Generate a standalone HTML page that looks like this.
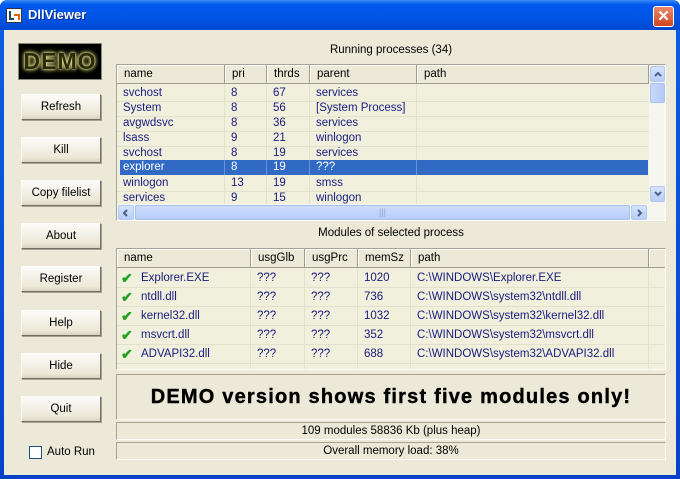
<!DOCTYPE html>
<html><head><meta charset="utf-8"><style>
*{margin:0;padding:0;box-sizing:border-box}
body{width:680px;height:479px;overflow:hidden;background:#fff;font-family:"Liberation Sans",Tahoma,sans-serif;font-size:11px;position:relative}
.a{position:absolute}
#win{left:0;top:0;width:680px;height:479px;background:linear-gradient(#0a5ee6,#0842c8);border-radius:7px 7px 0 0}
#title{left:0;top:0;width:680px;height:30px;background:linear-gradient(#3a8cf5 0%,#0058ee 15%,#0055e5 60%,#0048d0 100%);border-radius:7px 7px 0 0}
#client{left:4px;top:30px;width:672px;height:445px;background:#ece9d8}
.btn{position:absolute;left:21px;width:80px;height:26px;background:linear-gradient(#fbfbf8,#ece9d8 80%,#d8d4c4);border:1px solid;border-color:#fff #716f64 #716f64 #fff;box-shadow:1px 1px 0 #a6a395;text-align:center;line-height:24px;font-size:11.5px;color:#000}
.lv{position:absolute;left:116px;width:550px;background:#f0f0dc;border:1px solid;border-color:#a6a395 #fff #fff #a6a395;overflow:hidden}
.hd{position:absolute;top:0;height:19px;background:#ece9d8;border-right:1px solid #a09d90;border-bottom:1px solid #a09d90;box-shadow:inset 1px 1px 0 #fff;padding-left:7px;line-height:18px;font-size:11.5px;color:#000}
.r{position:absolute;left:0;height:15px;font-size:11.5px;color:#1a1a80;line-height:15px;white-space:nowrap}
.c{position:absolute;top:0;padding-left:4px}
.vl{position:absolute;top:19px;width:1px;background:#e2e2cc}
.hl{position:absolute;left:0;height:1px;background:#e2e2cc}
.panel{position:absolute;left:116px;width:550px;border:1px solid;border-color:#a6a395 #fff #fff #a6a395;text-align:center;font-size:11.5px;color:#000}
.sb{position:absolute;width:15px;height:15px;background:linear-gradient(#d6e3fe,#b6cdf8);border:1px solid #b4c8f0;border-radius:2px}
.sb svg{position:absolute;left:3px;top:3px}
.chk{color:#21a121;font-weight:bold;font-size:14px;position:absolute;left:4px}
</style></head><body>
<div id="win" class="a"></div>
<div id="title" class="a">
  <div class="a" style="left:6px;top:8px;width:16px;height:15px;background:#fff;border:1px solid #334"><div class="a" style="left:2px;top:2px;width:5px;height:9px;border-left:2px solid #246;border-bottom:2px solid #246"></div><div class="a" style="left:7px;top:5px;width:6px;height:6px;border-right:2px solid #d60;border-top:2px solid #d60"></div></div>
  <div class="a" style="left:28px;top:7px;color:#fff;font-weight:bold;font-size:13px;text-shadow:1px 1px 0 #0a2c8a">DllViewer</div>
  <div class="a" style="left:653px;top:6px;width:21px;height:21px;background:linear-gradient(#e88a6c,#d2451e);border:1px solid #fff;border-radius:3px;color:#fff;font-weight:bold;font-size:15px;text-align:center;line-height:19px">✕</div>
</div>
<div id="client" class="a"></div>

<div class="a" style="left:18px;top:43px;width:84px;height:37px;background:#000;border:1px solid #8a8878"><div style="text-align:center;font-size:23px;font-weight:bold;color:#2a2a08;line-height:35px;letter-spacing:1px;text-shadow:0 0 2px #e8e8a0,0 0 4px #d8d880,0 0 6px #a0a050">DEMO</div></div>

<div class="btn" style="top:94px">Refresh</div>
<div class="btn" style="top:137px">Kill</div>
<div class="btn" style="top:180px">Copy filelist</div>
<div class="btn" style="top:223px">About</div>
<div class="btn" style="top:266px">Register</div>
<div class="btn" style="top:310px">Help</div>
<div class="btn" style="top:353px">Hide</div>
<div class="btn" style="top:396px">Quit</div>
<div class="a" style="left:29px;top:446px;width:13px;height:13px;background:#fff;border:1px solid #1c5180"></div>
<div class="a" style="left:47px;top:446px;font-size:11.5px">Auto Run</div>

<div class="a" style="left:116px;top:44px;width:550px;text-align:center;font-size:11.5px">Running processes (34)</div>
<div class="lv" style="top:64px;height:157px">
  <div class="hd" style="left:0;width:108px">name</div>
  <div class="hd" style="left:108px;width:42px">pri</div>
  <div class="hd" style="left:150px;width:43px">thrds</div>
  <div class="hd" style="left:193px;width:107px">parent</div>
  <div class="hd" style="left:300px;width:232px">path</div>
  <div class="vl" style="left:107px;height:120px"></div><div class="vl" style="left:149px;height:120px"></div><div class="vl" style="left:192px;height:120px"></div><div class="vl" style="left:299px;height:120px"></div>
  <div class="r" style="top:21px"><span class="c" style="left:2px">svchost</span><span class="c" style="left:110px">8</span><span class="c" style="left:152px">67</span><span class="c" style="left:195px">services</span></div>
  <div class="hl" style="top:36px;width:532px"></div>
  <div class="r" style="top:36px"><span class="c" style="left:2px">System</span><span class="c" style="left:110px">8</span><span class="c" style="left:152px">56</span><span class="c" style="left:195px">[System Process]</span></div>
  <div class="hl" style="top:51px;width:532px"></div>
  <div class="r" style="top:51px"><span class="c" style="left:2px">avgwdsvc</span><span class="c" style="left:110px">8</span><span class="c" style="left:152px">36</span><span class="c" style="left:195px">services</span></div>
  <div class="hl" style="top:66px;width:532px"></div>
  <div class="r" style="top:66px"><span class="c" style="left:2px">lsass</span><span class="c" style="left:110px">9</span><span class="c" style="left:152px">21</span><span class="c" style="left:195px">winlogon</span></div>
  <div class="hl" style="top:81px;width:532px"></div>
  <div class="r" style="top:81px"><span class="c" style="left:2px">svchost</span><span class="c" style="left:110px">8</span><span class="c" style="left:152px">19</span><span class="c" style="left:195px">services</span></div>
  <div class="a" style="left:3px;top:95px;width:528px;height:15px;background:#316ac5"></div>
  <div class="r" style="top:95px;color:#fff"><span class="c" style="left:2px">explorer</span><span class="c" style="left:110px">8</span><span class="c" style="left:152px">19</span><span class="c" style="left:195px">???</span></div>
  <div class="a" style="left:107px;top:95px;width:1px;height:15px;background:#6a90d8"></div><div class="a" style="left:149px;top:95px;width:1px;height:15px;background:#6a90d8"></div><div class="a" style="left:192px;top:95px;width:1px;height:15px;background:#6a90d8"></div><div class="a" style="left:299px;top:95px;width:1px;height:15px;background:#6a90d8"></div>
  <div class="r" style="top:111px"><span class="c" style="left:2px">winlogon</span><span class="c" style="left:110px">13</span><span class="c" style="left:152px">19</span><span class="c" style="left:195px">smss</span></div>
  <div class="hl" style="top:126px;width:532px"></div>
  <div class="r" style="top:126px"><span class="c" style="left:2px">services</span><span class="c" style="left:110px">9</span><span class="c" style="left:152px">15</span><span class="c" style="left:195px">winlogon</span></div>
  <div class="a" style="left:532px;top:0;width:17px;height:139px;background:#f6f6f0"></div>
  <div class="sb" style="left:533px;top:1px;width:15px;height:16px"><svg width="8" height="8"><path d="M1 6L4 3L7 6" stroke="#4d6185" stroke-width="2" fill="none"/></svg></div>
  <div class="a" style="left:533px;top:18px;width:15px;height:20px;background:linear-gradient(90deg,#c8d8fc,#b4caf6);border:1px solid #a8bff0;border-radius:2px"></div>
  <div class="sb" style="left:533px;top:121px;width:15px;height:16px"><svg width="8" height="8"><path d="M1 2L4 5L7 2" stroke="#4d6185" stroke-width="2" fill="none"/></svg></div>
  <div class="a" style="left:0;top:139px;width:549px;height:17px;background:#f6f6f0"></div>
  <div class="sb" style="left:1px;top:140px;width:16px;height:15px"><svg width="8" height="8"><path d="M5 1L2 4L5 7" stroke="#4d6185" stroke-width="2" fill="none"/></svg></div>
  <div class="a" style="left:18px;top:140px;width:495px;height:15px;background:linear-gradient(#cfddfd,#b6ccf7);border:1px solid #a8bff0;border-radius:2px;text-align:center;color:#8aa4d8;font-size:9px;line-height:13px">|||</div>
  <div class="sb" style="left:514px;top:140px;width:16px;height:15px"><svg width="8" height="8"><path d="M3 1L6 4L3 7" stroke="#4d6185" stroke-width="2" fill="none"/></svg></div>
</div>

<div class="a" style="left:116px;top:227px;width:550px;text-align:center;font-size:11.5px">Modules of selected process</div>
<div class="lv" style="top:248px;height:122px">
  <div class="hd" style="left:0;width:134px">name</div>
  <div class="hd" style="left:134px;width:54px">usgGlb</div>
  <div class="hd" style="left:188px;width:53px">usgPrc</div>
  <div class="hd" style="left:241px;width:53px">memSz</div>
  <div class="hd" style="left:294px;width:238px">path</div>
  <div class="hd" style="left:532px;width:18px"></div>
  <div class="vl" style="left:133px;height:102px"></div><div class="vl" style="left:187px;height:102px"></div><div class="vl" style="left:240px;height:102px"></div><div class="vl" style="left:293px;height:102px"></div><div class="vl" style="left:531px;height:102px"></div>
  <div class="r" style="top:22px;height:19px"><span class="chk">✔</span><span class="c" style="left:20px">Explorer.EXE</span><span class="c" style="left:136px">???</span><span class="c" style="left:190px">???</span><span class="c" style="left:243px">1020</span><span class="c" style="left:296px">C:\WINDOWS\Explorer.EXE</span></div>
  <div class="hl" style="top:38px;width:548px"></div>
  <div class="r" style="top:41px"><span class="chk">✔</span><span class="c" style="left:20px">ntdll.dll</span><span class="c" style="left:136px">???</span><span class="c" style="left:190px">???</span><span class="c" style="left:243px">736</span><span class="c" style="left:296px">C:\WINDOWS\system32\ntdll.dll</span></div>
  <div class="hl" style="top:57px;width:548px"></div>
  <div class="r" style="top:60px"><span class="chk">✔</span><span class="c" style="left:20px">kernel32.dll</span><span class="c" style="left:136px">???</span><span class="c" style="left:190px">???</span><span class="c" style="left:243px">1032</span><span class="c" style="left:296px">C:\WINDOWS\system32\kernel32.dll</span></div>
  <div class="hl" style="top:76px;width:548px"></div>
  <div class="r" style="top:79px"><span class="chk">✔</span><span class="c" style="left:20px">msvcrt.dll</span><span class="c" style="left:136px">???</span><span class="c" style="left:190px">???</span><span class="c" style="left:243px">352</span><span class="c" style="left:296px">C:\WINDOWS\system32\msvcrt.dll</span></div>
  <div class="hl" style="top:95px;width:548px"></div>
  <div class="r" style="top:98px"><span class="chk">✔</span><span class="c" style="left:20px">ADVAPI32.dll</span><span class="c" style="left:136px">???</span><span class="c" style="left:190px">???</span><span class="c" style="left:243px">688</span><span class="c" style="left:296px">C:\WINDOWS\system32\ADVAPI32.dll</span></div>
  <div class="hl" style="top:114px;width:548px"></div>
</div>

<div class="panel" style="top:374px;height:46px;font-size:20px;font-weight:bold;line-height:44px;letter-spacing:1.2px;-webkit-text-stroke:0.4px #000">DEMO version shows first five modules only!</div>
<div class="panel" style="top:422px;height:18px;line-height:16px">109 modules 58836 Kb (plus heap)</div>
<div class="panel" style="top:442px;height:18px;line-height:16px">Overall memory load: 38%</div>
</body></html>
